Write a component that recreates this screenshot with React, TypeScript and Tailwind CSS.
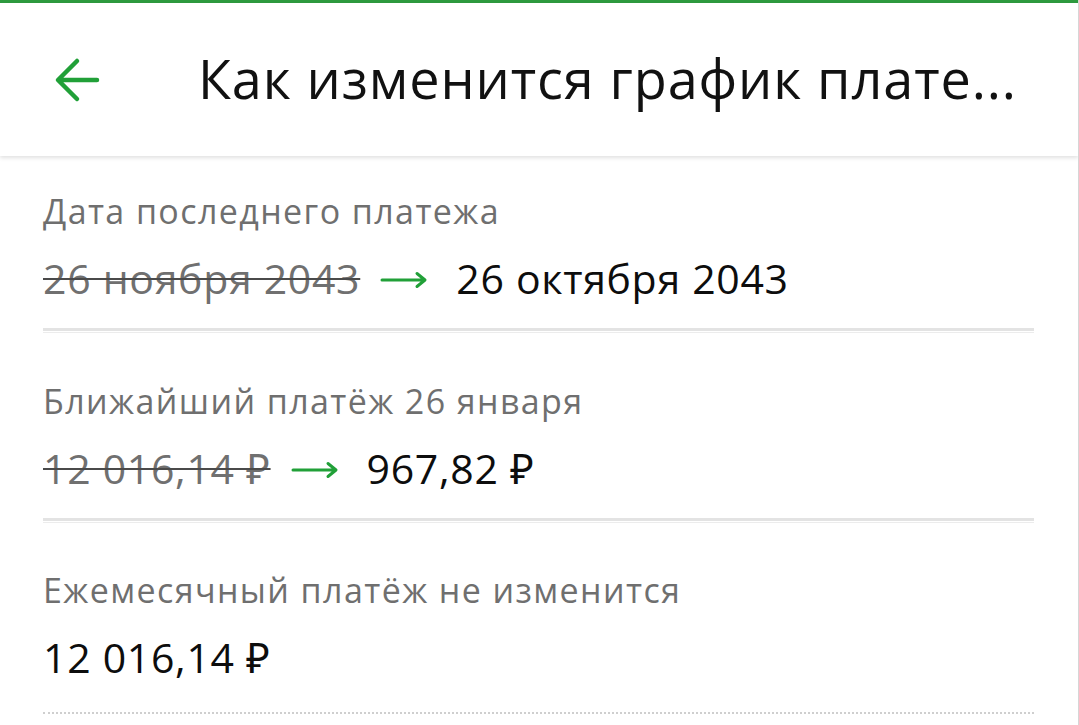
import React from 'react';

const font = { fontFamily: '"Open Sans", "Noto Sans", sans-serif' };

const Arrow = () => (
  <svg width="48" height="20" viewBox="0 0 48 20" className="shrink-0 mt-[16px]">
    <path d="M2 10 H44 M37 3.5 L45 10 L37 16.5" fill="none" stroke="#21a038" strokeWidth="3" strokeLinecap="round" strokeLinejoin="round" />
  </svg>
);

const Divider = () => (
  <div className="mt-[26px]">
    <div className="h-[3px] bg-[#e3e3e3]" />
    <div className="h-[1px] mt-[1px] bg-[#ececec]" />
  </div>
);

type Change = { label: string; from: string; to: string };

const rows: Change[] = [
  { label: 'Дата последнего платежа', from: '26 ноября 2043', to: '26 октября 2043' },
  { label: 'Ближайший платёж 26 января', from: '12 016,14 ₽', to: '967,82 ₽' },
];

export default function App() {
  return (
    <div className="w-[1079px] h-[725px] overflow-hidden bg-white border-r border-[#d6d6d6]" style={font}>
      <div className="h-[3px] bg-[#2e9a3f]" />
      <header className="h-[153px] flex items-center bg-white shadow-[0_2px_4px_rgba(0,0,0,0.12)] relative">
        <div className="w-[198px] pl-[53px] flex items-center">
          <svg width="48" height="48" viewBox="0 0 48 48">
            <path d="M44 24 H6 M24 5 L5 24 L24 43" fill="none" stroke="#21a038" strokeWidth="4.5" strokeLinecap="round" strokeLinejoin="round" />
          </svg>
        </div>
        <h1 className="text-[54px] leading-[60px] tracking-[0.9px] text-[#111] mt-[-4px] whitespace-nowrap">
          Как изменится график плате...
        </h1>
      </header>

      <main className="pl-[43px] pr-[44px] pt-[35px]">
        {rows.map((r, i) => (
          <section key={i} className={i > 0 ? 'mt-[48px]' : ''}>
            <div className="text-[34px] leading-[40px] tracking-[1.4px] text-[#6f6f6f]">{r.label}</div>
            <div className="mt-[23px] flex items-start text-[41px] leading-[48px] tracking-[0.7px]">
              <span className="text-[#707070] line-through decoration-[2px] decoration-[#4a4a4a]">{r.from}</span>
              <span className="ml-[20px]"><Arrow /></span>
              <span className="text-[#0d0d0d] ml-[28px]">{r.to}</span>
            </div>
            <Divider />
          </section>
        ))}

        <section className="mt-[47px]">
          <div className="text-[34px] leading-[40px] tracking-[1.4px] text-[#6f6f6f]">Ежемесячный платёж не изменится</div>
          <div className="mt-[23px] text-[41px] leading-[48px] tracking-[0.7px] text-[#0d0d0d]">12 016,14 ₽</div>
          <div className="mt-[31px] border-t-2 border-dotted border-[#cfcfcf]" />
        </section>
      </main>
    </div>
  );
}
